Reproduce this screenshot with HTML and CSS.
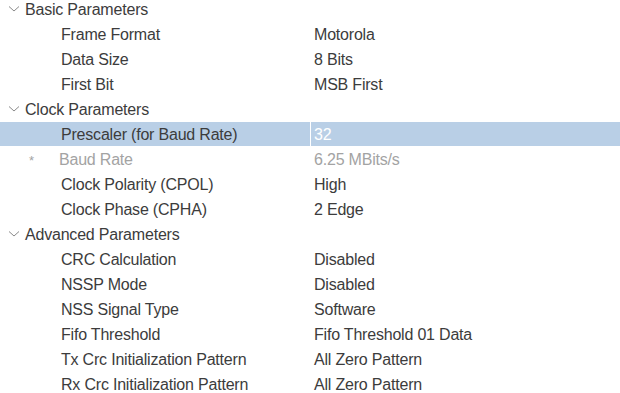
FILE: index.html
```html
<!DOCTYPE html>
<html lang="en">
<head>
    <meta charset="UTF-8">
    <title>Parameter Settings</title>
    <link rel="stylesheet" href="styles.css">
</head>
<body>
    <div class="tree">
        <div class="row group">
            <span class="twisty"><svg width="12" height="8" viewBox="0 0 12 8"><path d="M1 1.5 L6 6 L11 1.5" /></svg></span>
            <span class="label">Basic Parameters</span>
        </div>
        <div class="row">
            <span class="name">Frame Format</span>
            <span class="value">Motorola</span>
        </div>
        <div class="row">
            <span class="name">Data Size</span>
            <span class="value">8 Bits</span>
        </div>
        <div class="row">
            <span class="name">First Bit</span>
            <span class="value">MSB First</span>
        </div>

        <div class="row group">
            <span class="twisty"><svg width="12" height="8" viewBox="0 0 12 8"><path d="M1 1.5 L6 6 L11 1.5" /></svg></span>
            <span class="label">Clock Parameters</span>
        </div>
        <div class="row selected">
            <span class="name">Prescaler (for Baud Rate)</span>
            <span class="value">32</span>
        </div>
        <div class="row readonly">
            <span class="name"><span class="star">*</span>Baud Rate</span>
            <span class="value">6.25 MBits/s</span>
        </div>
        <div class="row">
            <span class="name">Clock Polarity (CPOL)</span>
            <span class="value">High</span>
        </div>
        <div class="row">
            <span class="name">Clock Phase (CPHA)</span>
            <span class="value">2 Edge</span>
        </div>

        <div class="row group">
            <span class="twisty"><svg width="12" height="8" viewBox="0 0 12 8"><path d="M1 1.5 L6 6 L11 1.5" /></svg></span>
            <span class="label">Advanced Parameters</span>
        </div>
        <div class="row">
            <span class="name">CRC Calculation</span>
            <span class="value">Disabled</span>
        </div>
        <div class="row">
            <span class="name">NSSP Mode</span>
            <span class="value">Disabled</span>
        </div>
        <div class="row">
            <span class="name">NSS Signal Type</span>
            <span class="value">Software</span>
        </div>
        <div class="row">
            <span class="name">Fifo Threshold</span>
            <span class="value">Fifo Threshold 01 Data</span>
        </div>
        <div class="row">
            <span class="name">Tx Crc Initialization Pattern</span>
            <span class="value">All Zero Pattern</span>
        </div>
        <div class="row">
            <span class="name">Rx Crc Initialization Pattern</span>
            <span class="value">All Zero Pattern</span>
        </div>
    </div>
</body>
</html>
```

FILE: styles.css
```css
body {
    margin: 0;
    background-color: #ffffff;
    font-family: "Liberation Sans", Arial, sans-serif;
    font-size: 16px;
    letter-spacing: -0.2px;
    color: #3c3c3c;
    overflow: hidden;
}

.tree {
    margin-top: -3px; /* first row is scrolled a little */
}

.row {
    display: flex;
    align-items: center;
    height: 24px;
    margin-bottom: 1px;
    white-space: nowrap;
}

.group .twisty {
    width: 25px;
    display: flex;
    justify-content: center;
    padding-left: 2px;
    box-sizing: border-box;
}

.twisty svg path {
    fill: none;
    stroke: #8a8a8a;
    stroke-width: 1;
}

.label,
.value {
    padding-top: 2px;
}

.name {
    width: 311px;
    height: 100%;
    padding-left: 61px;
    padding-top: 2px;
    box-sizing: border-box;
    border-right: 1px solid transparent;
    display: flex;
    align-items: center;
}

.value {
    padding-left: 3px;
}

.selected {
    background-color: #b9cfe6;
}

.selected .name {
    border-right-color: #ffffff;
}

.selected .value {
    color: #ffffff;
}

.readonly {
    color: #a3a3a3;
}

.readonly .name {
    padding-left: 29px;
}

.star {
    width: 30px;
    font-size: 13px;
}
```
